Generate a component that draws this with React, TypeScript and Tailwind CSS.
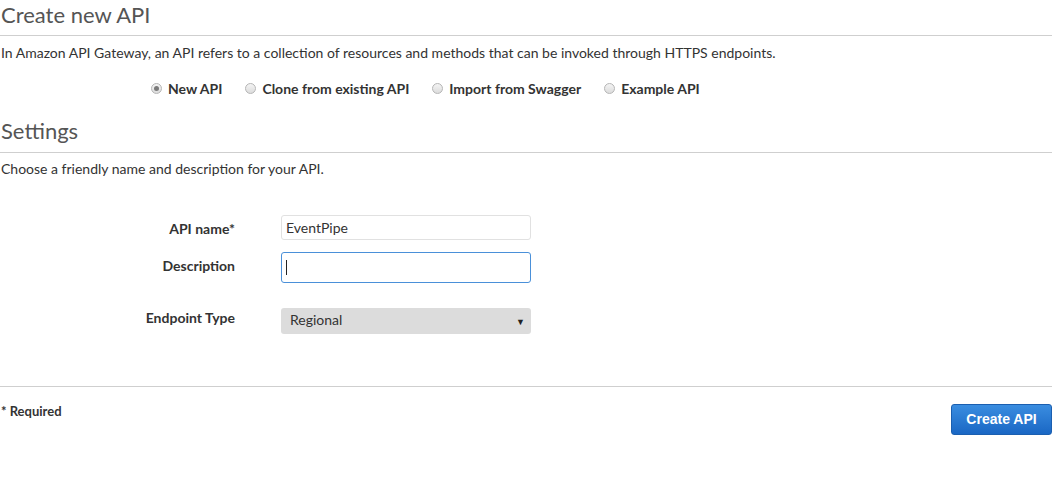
import React, { useState } from 'react';

const options = ['New API', 'Clone from existing API', 'Import from Swagger', 'Example API'];

const Radio: React.FC<{ checked: boolean }> = ({ checked }) => (
  <span className="inline-flex h-[11px] w-[11px] items-center justify-center rounded-full border border-[#b5b5b5] bg-gradient-to-b from-[#f4f4f4] to-[#dcdcdc]">
    {checked && <span className="h-[5px] w-[5px] rounded-full bg-[#7a7a7a]" />}
  </span>
);

const App: React.FC = () => {
  const [choice, setChoice] = useState('New API');
  const [name, setName] = useState('EventPipe');

  return (
    <div className="min-h-screen w-full bg-white pr-[10px] text-[#444] font-['Lato','Noto_Sans',sans-serif]">
      <h1 className="h-[36px] border-b border-[#cfcfcf] pt-[1px] pl-[1px] text-[22px] leading-[28px] text-[#555]">
        Create new API
      </h1>
      <p className="mt-[8px] pl-[1px] text-[14px] leading-[17px] text-[#333]">
        In Amazon API Gateway, an API refers to a collection of resources and methods that can be invoked through HTTPS endpoints.
      </p>

      <div className="mt-[18px] flex h-[18px] items-center pl-[151px] text-[14px] font-bold text-[#333]">
        {options.map((o, i) => (
          <label
            key={o}
            onClick={() => setChoice(o)}
            className={`flex cursor-pointer items-center gap-[6px] ${i < options.length - 1 ? 'mr-[23px]' : ''}`}
          >
            <Radio checked={choice === o} />
            {o}
          </label>
        ))}
      </div>

      <h2 className="mt-[20px] h-[36px] border-b border-[#cfcfcf] pl-[1px] text-[22px] leading-[28px] text-[#555]">
        Settings
      </h2>
      <p className="mt-[7px] pl-[1px] text-[14px] leading-[17px] text-[#333]">
        Choose a friendly name and description for your API.
      </p>

      <div className="mt-[38px] grid grid-cols-[235px_250px] gap-x-[46px] text-[14px] leading-[17px]">
        <div className="flex h-[25px] items-center justify-end pt-[1px] font-bold text-[#333]">API name*</div>
        <input
          value={name}
          onChange={e => setName(e.target.value)}
          className="h-[25px] rounded-[3px] border border-[#e1e1e1] px-[4px] text-[14px] text-[#333] outline-none"
        />

        <div className="mt-[12px] flex h-[31px] items-start justify-end pt-[5px] font-bold text-[#333]">Description</div>
        <div className="relative mt-[12px] h-[31px]">
          <input className="h-full w-full rounded-[3px] border border-[#4a90d9] px-[4px] text-[14px] text-[#333] caret-transparent outline-none" />
          {/* focused caret */}
          <span className="pointer-events-none absolute left-[5px] top-[8px] h-[15px] w-px bg-[#222]" />
        </div>

        <div className="mt-[25px] flex h-[18px] items-start justify-end pt-[1px] font-bold text-[#333]">Endpoint Type</div>
        <div className="mt-[25px] flex h-[26px] items-center justify-between rounded-[3px] bg-[#dcdcdc] pb-[3px] pl-[9px] pr-[6px] text-[#333]">
          <span>Regional</span>
          <span className="mt-[3px] text-[9px] leading-none text-[#222]">▼</span>
        </div>
      </div>

      <div className="mt-[52px] flex items-start justify-between border-t border-[#cfcfcf] pt-[14px]">
        <span className="pl-[1px] text-[13px] leading-[20px] font-bold text-[#333]">* Required</span>
        <button className="mt-[3px] h-[31px] w-[101px] rounded-[3px] border border-[#1b5fb0] bg-gradient-to-b from-[#3a8de0] to-[#1a67c4] font-['Liberation_Sans',Arial,sans-serif] text-[14px] font-bold text-white">
          Create API
        </button>
      </div>
    </div>
  );
};

export default App;
